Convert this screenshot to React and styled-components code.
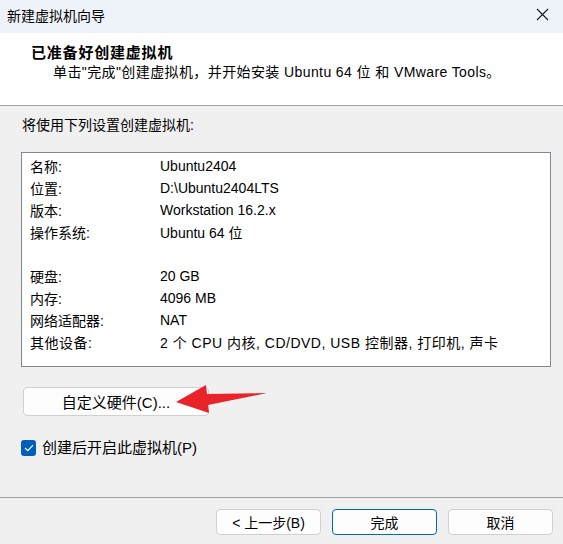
import React from 'react';
import styled, { createGlobalStyle } from 'styled-components';

const GlobalStyle = createGlobalStyle`
  html, body {
    margin: 0;
    padding: 0;
    background: #f0f0f0;
  }
  body {
    font-family: "Liberation Sans", "Noto Sans CJK SC", sans-serif;
    color: #000;
  }
`;

const Window = styled.div`
  width: 563px;
  height: 544px;
  display: flex;
  flex-direction: column;
  background: #f0f0f0;
  overflow: hidden;
`;

const TitleBar = styled.div`
  height: 33px;
  flex: none;
  display: flex;
  align-items: center;
  justify-content: space-between;
  padding: 0 14px 4px 7px;
  box-sizing: border-box;
  background: #eef3f9;
  font-size: 14px;
`;

const Header = styled.div`
  height: 73px;
  flex: none;
  box-sizing: border-box;
  background: #fff;
  border-bottom: 1px solid #a0a0a0;
  padding: 9px 0 0 31px;
`;

const Heading = styled.div`
  font-family: "Noto Sans CJK SC", sans-serif;
  font-weight: bold;
  font-size: 15px;
  line-height: 20px;
  letter-spacing: 0.8px;
`;

const SubText = styled.div`
  font-size: 14px;
  line-height: 20px;
  padding-left: 22px;
  letter-spacing: 0.4px;
`;

const Body = styled.div`
  flex: 1;
  padding: 9px 12px 0 21px;
`;

const Label = styled.div`
  font-size: 14px;
  line-height: 20px;
  padding-left: 1px;
`;

const ListBox = styled.div`
  margin-top: 17px;
  width: 530px;
  height: 215px;
  box-sizing: border-box;
  background: #fff;
  border: 1px solid #828790;
  padding: 2px 0 0 8px;
`;

const Row = styled.div`
  display: grid;
  grid-template-columns: 130px 1fr;
  height: 22px;
  align-items: center;
  font-size: 14px;
  white-space: nowrap;
  letter-spacing: ${p => (p.$wide ? '0.5px' : '0')};
`;

const ButtonRow = styled.div`
  position: relative;
  margin-top: 20px;
  padding-left: 2px;
`;

const Button = styled.button`
  width: ${p => p.$w || 105}px;
  height: ${p => p.$h || 26}px;
  box-sizing: border-box;
  background: #fdfdfd;
  border: 1px solid ${p => (p.$primary ? '#0067c0' : '#d0d0d0')};
  border-radius: 4px;
  font-family: "Liberation Sans", "Noto Sans CJK SC", sans-serif;
  font-size: ${p => p.$fs || 14}px;
  color: #000;
  padding: 0;
`;

const Arrow = styled.svg`
  position: absolute;
  left: 149px;
  top: -5px;
`;

const CheckRow = styled.label`
  margin-top: 23px;
  display: flex;
  align-items: center;
  gap: 6px;
  font-size: 15px;
  line-height: 18px;
`;

const Box = styled.span`
  width: 15px;
  height: 16px;
  border-radius: 3px;
  background: #005fb8;
  display: flex;
  align-items: center;
  justify-content: center;
`;

const Footer = styled.div`
  height: 47px;
  flex: none;
  box-sizing: border-box;
  border-top: 1px solid #a0a0a0;
  display: flex;
  justify-content: flex-end;
  align-items: flex-start;
  gap: 11px;
  padding: 11px 10px 0 0;
`;

const rows = [
  ['名称:', 'Ubuntu2404'],
  ['位置:', 'D:\\Ubuntu2404LTS'],
  ['版本:', 'Workstation 16.2.x'],
  ['操作系统:', 'Ubuntu 64 位'],
  ['', ''],
  ['硬盘:', '20 GB'],
  ['内存:', '4096 MB'],
  ['网络适配器:', 'NAT'],
  ['其他设备:', '2 个 CPU 内核, CD/DVD, USB 控制器, 打印机, 声卡', true],
];

export default function App() {
  return (
    <Window>
      <GlobalStyle />
      <TitleBar>
        <span>新建虚拟机向导</span>
        <svg width="13" height="13" viewBox="0 0 13 13">
          <path d="M1 1 L12 12 M12 1 L1 12" stroke="#1a1a1a" strokeWidth="1.1" fill="none" />
        </svg>
      </TitleBar>
      <Header>
        <Heading>已准备好创建虚拟机</Heading>
        <SubText>单击"完成"创建虚拟机，并开始安装 Ubuntu 64 位 和 VMware Tools。</SubText>
      </Header>
      <Body>
        <Label>将使用下列设置创建虚拟机:</Label>
        <ListBox>
          {rows.map(([k, v, wide], i) => (
            <Row key={i} $wide={wide}>
              <span>{k}</span>
              <span>{v}</span>
            </Row>
          ))}
        </ListBox>
        <ButtonRow>
          <Button $w={186} $h={29} $fs={15}>自定义硬件(C)...</Button>
          <Arrow width="100" height="36" viewBox="0 0 100 36">
            <polygon points="6,20 36,3 37,12 97,11 38,23 39,31" fill="#e8232a" />
          </Arrow>
        </ButtonRow>
        <CheckRow>
          <Box>
            <svg width="10" height="8" viewBox="0 0 10 8">
              <path d="M1 4 L3.8 6.6 L9 1.2" stroke="#fff" strokeWidth="1.2" fill="none" />
            </svg>
          </Box>
          创建后开启此虚拟机(P)
        </CheckRow>
      </Body>
      <Footer>
        <Button>&lt; 上一步(B)</Button>
        <Button $primary>完成</Button>
        <Button>取消</Button>
      </Footer>
    </Window>
  );
}
